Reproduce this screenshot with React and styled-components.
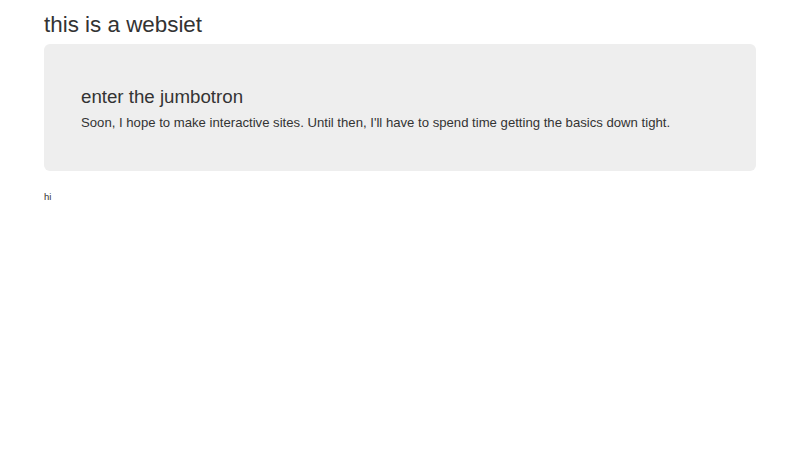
import React from "react";
import styled, { createGlobalStyle } from "styled-components";

const Global = createGlobalStyle`
  html, body { margin: 0; padding: 0; background: #fff; }
  body { font-family: "Liberation Sans", Arial, sans-serif; color: #333; }
`;

const Container = styled.div`
  width: 712px;
  margin: 0 0 0 44px;
`;

const Title = styled.h1`
  margin: 10px 0 4px;
  font-size: 22.4px;
  line-height: 30px;
  font-weight: 400;
  color: #333;
`;

const Jumbotron = styled.div`
  background: #eee;
  border-radius: 6px;
  padding: 42px 37px 36px;
`;

const Heading = styled.h2`
  margin: 0 0 3px;
  font-size: 18.7px;
  line-height: 22px;
  font-weight: 400;
  color: #333;
`;

const Lead = styled.p`
  margin: 0;
  font-size: 13.15px;
  line-height: 24px;
  color: #333;
`;

const Small = styled.p`
  margin: 20px 0 0;
  font-size: 9.5px;
  line-height: 12px;
  color: #333;
`;

export default function App() {
  return (
    <>
      <Global />
      <Container>
        <Title>this is a websiet</Title>
        <Jumbotron>
          <Heading>enter the jumbotron</Heading>
          <Lead>
            Soon, I hope to make interactive sites. Until then, I'll have to spend time getting the basics down tight.
          </Lead>
        </Jumbotron>
        <Small>hi</Small>
      </Container>
    </>
  );
}
